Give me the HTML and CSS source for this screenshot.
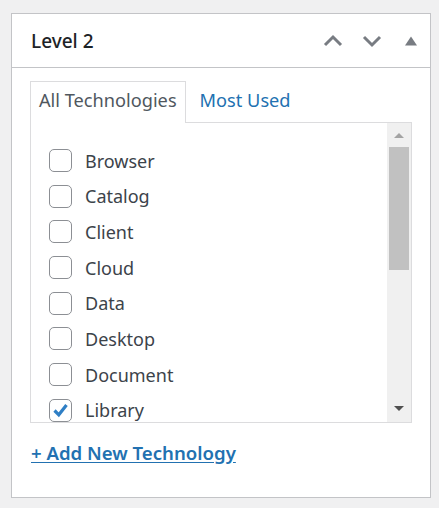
FILE: index.html
```html
<!DOCTYPE html>
<html>
<head>
<meta charset="utf-8">
<link rel="stylesheet" href="styles.css">
</head>
<body>
<div class="postbox">
  <div class="postbox-header">
    <h2 class="hndle">Level 2</h2>
    <div class="handle-actions">
      <svg class="act up" width="24" height="24" viewBox="0 0 24 24"><polyline points="4,16 12,8 20,16" fill="none" stroke="#787c82" stroke-width="3"/></svg>
      <svg class="act down" width="24" height="24" viewBox="0 0 24 24"><polyline points="4,8 12,16 20,8" fill="none" stroke="#787c82" stroke-width="3"/></svg>
      <svg class="act tri" width="14" height="24" viewBox="0 0 14 24"><polygon points="1,16.5 7,7.5 13,16.5" fill="#787c82"/></svg>
    </div>
  </div>
  <div class="inside">
    <ul class="tabs">
      <li class="tab active">All Technologies</li>
      <li class="tab"><a href="#">Most Used</a></li>
    </ul>
    <div class="panel">
      <ul class="checklist">
        <li class="item"><span class="cb"></span><span class="lbl">Browser</span></li>
        <li class="item"><span class="cb"></span><span class="lbl">Catalog</span></li>
        <li class="item"><span class="cb"></span><span class="lbl">Client</span></li>
        <li class="item"><span class="cb"></span><span class="lbl">Cloud</span></li>
        <li class="item"><span class="cb"></span><span class="lbl">Data</span></li>
        <li class="item"><span class="cb"></span><span class="lbl">Desktop</span></li>
        <li class="item"><span class="cb"></span><span class="lbl">Document</span></li>
        <li class="item"><span class="cb checked"><svg width="21" height="21" viewBox="0 0 21 21"><path d="M4.5 10.5 L8.8 14.8 L16.5 5" fill="none" stroke="#2f7fc5" stroke-width="3.2" stroke-linecap="butt"/></svg></span><span class="lbl">Library</span></li>
      </ul>
      <div class="scrollbar">
        <div class="arrow up"></div>
        <div class="track"><div class="thumb"></div></div>
        <div class="arrow down"></div>
      </div>
    </div>
    <a class="add-new" href="#">+ Add New Technology</a>
  </div>
</div>
</body>
</html>
```

FILE: styles.css
```css
* { box-sizing: border-box; }
html, body { margin: 0; padding: 0; }
body {
  background: #f0f0f1;
  padding: 13px 8px 10px 11px;
  font-family: "Noto Sans", "Open Sans", sans-serif;
}
.postbox {
  width: 420px;
  height: 485px;
  background: #fff;
  border: 1px solid #c3c4c7;
}
.postbox-header {
  height: 54px;
  border-bottom: 1px solid #c3c4c7;
  display: flex;
  align-items: center;
  justify-content: space-between;
  padding: 0 12px 0 19px;
}
.hndle {
  margin: 0;
  font-size: 19px;
  font-weight: 500;
  color: #1d2327;
}
.handle-actions {
  display: flex;
  align-items: center;
}
.act { display: block; }
.act.down { margin-left: 15px; }
.act.tri { margin-left: 20px; }
.inside {
  padding: 13px 18px 0 18px;
}
.tabs {
  list-style: none;
  margin: 0;
  padding: 0;
  display: flex;
  height: 41px;
  position: relative;
  z-index: 1;
}
.tab {
  font-size: 18.2px;
  padding: 0 8px 4px;
  line-height: 36px;
  color: #50575e;
  border: 1px solid transparent;
  border-bottom: none;
}
.tab.active {
  border-color: #dcdcde;
  background: #fff;
  height: 42px;
}
.tab a {
  color: #2271b1;
  text-decoration: none;
  padding-left: 5px;
}
.panel {
  border: 1px solid #dcdcde;
  width: 382px;
  height: 301px;
  display: flex;
}
.checklist {
  list-style: none;
  margin: 0;
  padding: 26px 0 0 18px;
  flex: 1;
  display: flex;
  flex-direction: column;
  gap: 12.7px;
  overflow: hidden;
}
.item {
  display: flex;
  align-items: center;
  height: 23px;
  flex-shrink: 0;
}
.cb {
  width: 23px;
  height: 23px;
  border: 1px solid #8c8f94;
  border-radius: 5px;
  background: #fff;
  display: flex;
  align-items: center;
  justify-content: center;
  flex-shrink: 0;
}
.lbl {
  margin-left: 13px;
  font-size: 18px;
  color: #3c434a;
}
.scrollbar {
  width: 24px;
  background: #f0f0f0;
  display: flex;
  flex-direction: column;
  align-items: center;
}
.arrow {
  width: 0;
  height: 0;
  border-left: 5.5px solid transparent;
  border-right: 5.5px solid transparent;
}
.arrow.up {
  border-bottom: 5px solid #a3a3a3;
  margin: 10px 0 9px;
}
.arrow.down {
  border-top: 5px solid #505050;
  margin: 6px 0 11px;
}
.track {
  flex: 1;
  width: 100%;
  padding: 0 2px;
}
.thumb {
  height: 123px;
  background: #c1c1c1;
}
.add-new {
  display: inline-block;
  margin-top: 17px;
  margin-left: 1px;
  font-size: 18.6px;
  font-weight: 600;
  color: #2271b1;
  text-decoration: underline;
  text-underline-offset: 2px;
}
```
